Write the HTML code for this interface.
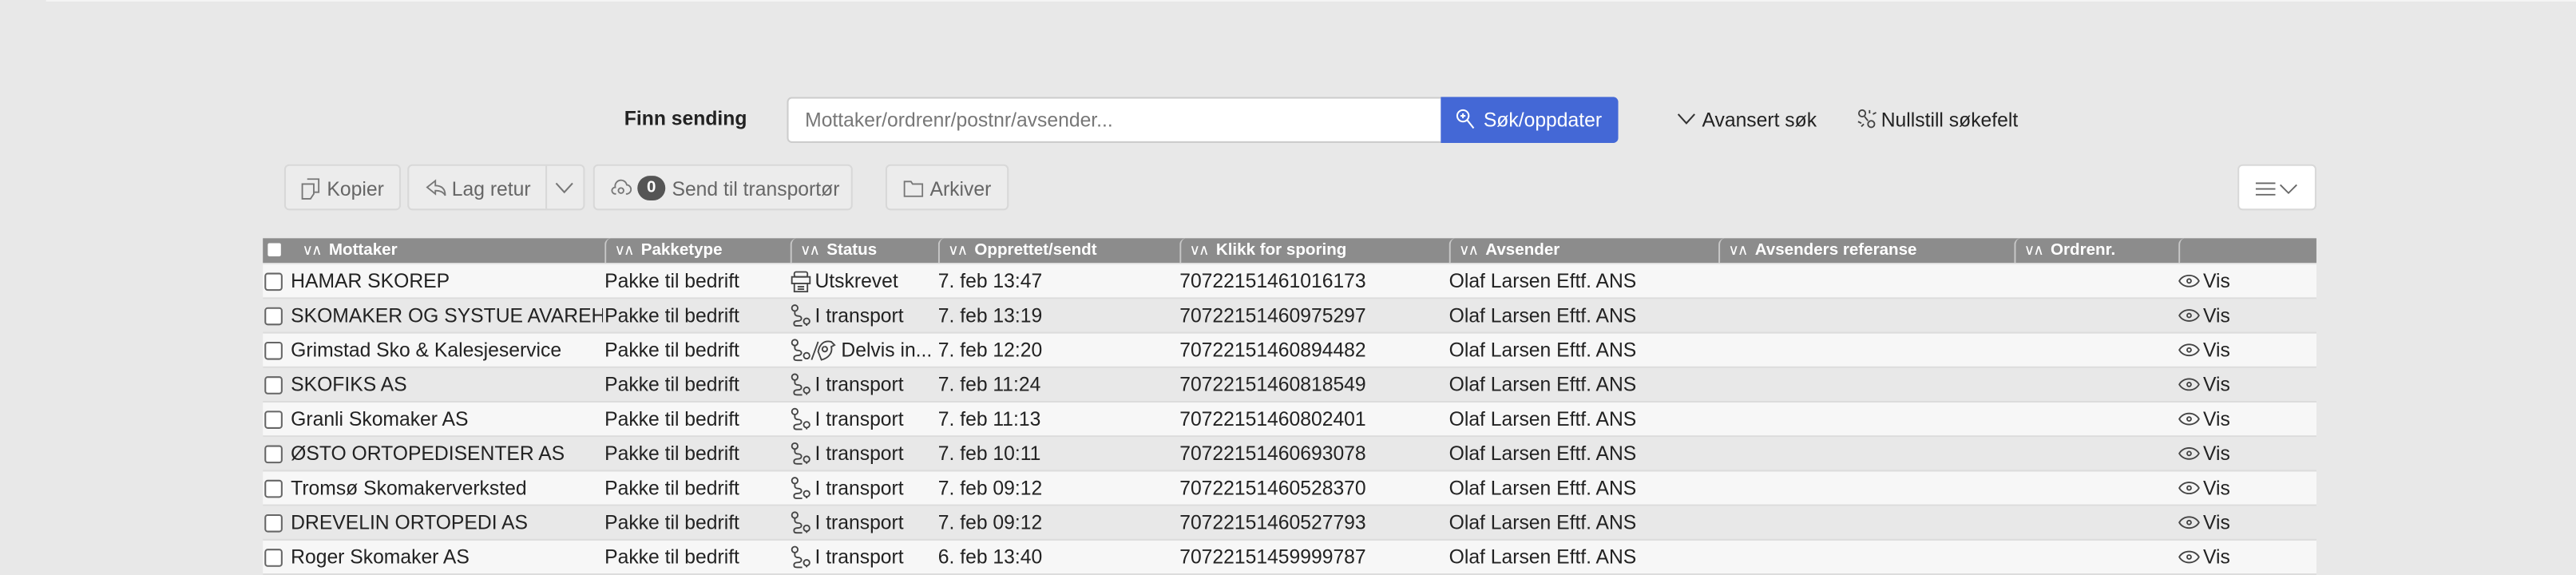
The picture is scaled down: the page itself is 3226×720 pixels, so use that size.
<!DOCTYPE html>
<html><head><meta charset="utf-8">
<style>
html,body{margin:0;padding:0;width:3226px;height:694px;overflow:hidden;background:#e8e8e8;}
#s{position:absolute;left:0;top:0;width:1568px;height:337px;transform:scale(2.0574);transform-origin:0 0;font-family:"Liberation Sans",Arial,sans-serif;color:#222;}
.a{position:absolute;white-space:nowrap;}
.topline{left:28px;top:0;width:1540px;height:1px;background:#f4f4f4;}
.lbl{left:380px;top:65px;font-size:12px;font-weight:bold;}
.inp{left:479px;top:59px;width:398px;height:28px;background:#fff;border:1px solid #ccc;border-right:none;border-radius:3px 0 0 3px;box-sizing:border-box;}
.inp span{position:absolute;left:10px;top:6px;font-size:12px;color:#777;}
.btn{left:877px;top:59px;width:108px;height:28px;background:#4468d6;border-radius:0 3px 3px 0;color:#fff;font-size:12px;}
.lnk{font-size:12px;top:66px;color:#222;}
.tb{top:100px;height:28px;border:1px solid #d8d8d8;border-radius:3px;background:#ececec;box-sizing:border-box;font-size:12px;color:#666;}
.tb span{position:absolute;top:7px;}
.hdr{left:160px;top:145px;width:1250px;height:15px;background:#8c8c8c;}
.hc{position:absolute;top:0;height:15px;border-left:1px solid #c8c8c8;border-radius:4px 4px 0 0;color:#fff;font-size:10px;font-weight:bold;line-height:15px;}
.hc i{font-style:normal;font-weight:normal;font-size:9px;margin-right:5px;letter-spacing:-1px;}
.row{position:absolute;left:160px;width:1250px;height:21px;border-bottom:1px solid #dcdcdc;box-sizing:border-box;font-size:12px;line-height:20px;}
.row span{position:absolute;top:0;white-space:nowrap;}
.cb{position:absolute;left:1px;top:5px;width:9px;height:9px;border:1px solid #666;border-radius:2px;background:#fff;}
svg{position:absolute;}
</style></head><body><div id="s">
<div class="a topline"></div>
<div class="a lbl">Finn sending</div>
<div class="a inp"><span>Mottaker/ordrenr/postnr/avsender...</span></div>
<div class="a btn">
<svg style="left:9px;top:7px" width="12" height="14" viewBox="0 0 12 14" fill="none" stroke="#fff" stroke-width="1"><circle cx="4.5" cy="4.5" r="3.5"/><path d="M3 4.5h3M4.5 3v3M7 7l4 5"/></svg>
<span style="position:absolute;left:26px;top:7px">Søk/oppdater</span></div>
<svg style="left:1021px;top:69px" width="11" height="7" viewBox="0 0 11 7" fill="none" stroke="#333"><path d="M0.5 0.5l5 5.5 5-5.5"/></svg>
<div class="a lnk" style="left:1036px">Avansert søk</div>
<svg style="left:1130px;top:66px" width="13" height="13" viewBox="0 0 13 13" fill="none" stroke="#444" stroke-width=".9"><circle cx="3.5" cy="3" r="2"/><circle cx="9" cy="9.5" r="2"/><path d="M5 5l2 2.5M8 1v2M10 3.5l2-1M1 8l2 1M3 11l1.5-1.5"/></svg>
<div class="a lnk" style="left:1145px">Nullstill søkefelt</div>

<div class="a tb" style="left:173px;width:71px"><svg style="left:9px;top:7px" width="12" height="14" viewBox="0 0 12 14" fill="none" stroke="#777" stroke-width=".9"><path d="M4 1h7v8H8M1 4h7v6l-2 3H1z"/></svg><span style="left:25px">Kopier</span></div>
<div class="a tb" style="left:248px;width:108px"><svg style="left:10px;top:8px" width="13" height="11" viewBox="0 0 13 11" fill="none" stroke="#777" stroke-width=".9"><path d="M6 1L1 5l5 4V7c3 0 5 1 6 3 0-4-2-6-6-6z"/></svg><span style="left:26px">Lag retur</span><div style="position:absolute;left:83px;top:0;width:1px;height:26px;background:#d8d8d8"></div><svg style="left:89px;top:10px" width="11" height="7" viewBox="0 0 11 7" fill="none" stroke="#777"><path d="M.5.5l5 5.5 5-5.5"/></svg></div>
<div class="a tb" style="left:361px;width:158px"><svg style="left:10px;top:8px" width="13" height="11" viewBox="0 0 13 11" fill="none" stroke="#777" stroke-width=".9"><path d="M3 9H2.5A2 2 0 0 1 2.5 5 3.5 3.5 0 0 1 9.5 3.5 2.8 2.8 0 0 1 10 9H9"/><circle cx="6" cy="7" r="1.6"/></svg><div style="position:absolute;left:26px;top:6px;width:17px;height:15px;border-radius:8px;background:#555;color:#fff;font-size:10px;font-weight:bold;text-align:center;line-height:15px">0</div><span style="left:47px">Send til transportør</span></div>
<div class="a tb" style="left:539px;width:75px"><svg style="left:10px;top:8px" width="12" height="11" viewBox="0 0 12 11" fill="none" stroke="#777" stroke-width=".9"><path d="M.5 1.5h4l1 1.5h6v7.5H.5z"/></svg><span style="left:26px">Arkiver</span></div>
<div class="a tb" style="left:1362px;width:48px;background:#fff"><svg style="left:10px;top:10px" width="27" height="8" viewBox="0 0 27 8" fill="none" stroke="#666" stroke-width=".9"><path d="M0 .5h12M0 4h12M0 7.5h12M15 1.5l5 5 5-5"/></svg></div>

<div class="a hdr">
<div class="hc" style="left:0;width:207px;border-left:none"><div style="position:absolute;left:3px;top:3px;width:8px;height:8px;background:#fff;border-radius:1px"></div><span style="position:absolute;left:24px"><i>∨∧</i>Mottaker</span></div>
<div class="hc" style="left:208px;width:112px"><span style="position:absolute;left:5px"><i>∨∧</i>Pakketype</span></div>
<div class="hc" style="left:321px;width:89px"><span style="position:absolute;left:5px"><i>∨∧</i>Status</span></div>
<div class="hc" style="left:411px;width:146px"><span style="position:absolute;left:5px"><i>∨∧</i>Opprettet/sendt</span></div>
<div class="hc" style="left:558px;width:163px"><span style="position:absolute;left:5px"><i>∨∧</i>Klikk for sporing</span></div>
<div class="hc" style="left:722px;width:163px"><span style="position:absolute;left:5px"><i>∨∧</i>Avsender</span></div>
<div class="hc" style="left:886px;width:179px"><span style="position:absolute;left:5px"><i>∨∧</i>Avsenders referanse</span></div>
<div class="hc" style="left:1066px;width:99px"><span style="position:absolute;left:5px"><i>∨∧</i>Ordrenr.</span></div>
<div class="hc" style="left:1166px;width:84px"></div>
</div>

<div id="rows"></div>
</div>
<svg width="0" height="0" style="position:absolute">
</svg>
<script>
var P='<svg style="left:321px;top:4px" width="13" height="13" viewBox="0 0 13 13" fill="none" stroke="#444" stroke-width=".9"><rect x="2.5" y=".5" width="8" height="3" rx="1"/><path d="M1 3.5h11v4H1zM2.5 7.5v5h8v-5M4.5 9.5h4M4.5 11h4"/></svg>';
var T='<svg style="left:321px;top:3px" width="13" height="14" viewBox="0 0 13 14" fill="none" stroke="#444" stroke-width=".9"><circle cx="2.8" cy="2.5" r="1.8"/><path d="M2.8 4.3v1.5c0 1 1 1.5 2 1.5s2 .5 2 1.5-1 1.5-2 1.5-2.5.2-2.5 1.5.5 1.5 2 1.5h3"/><circle cx="10" cy="10.5" r="1.8"/><path d="M10 12.3v1"/></svg>';
var D='<svg style="left:321px;top:3px" width="30" height="14" viewBox="0 0 30 14" fill="none" stroke="#444" stroke-width=".9"><circle cx="2.8" cy="2.5" r="1.8"/><path d="M2.8 4.3v1.5c0 1 1 1.5 2 1.5s2 .5 2 1.5-1 1.5-2 1.5-2.5.2-2.5 1.5.5 1.5 2 1.5h3"/><circle cx="10" cy="10.5" r="1.8"/><path d="M13 13l4-11M17 8c1-5 4-7 8-6l2 2-2 1c1 4-2 7-6 8zM21 5a1.5 1.5 0 1 0 .1 0"/></svg>';
var E='<svg style="left:1166px;top:6px" width="13" height="8" viewBox="0 0 13 8" fill="none" stroke="#444" stroke-width=".9"><path d="M.5 4C3-.5 10-.5 12.5 4 10 8.5 3 8.5.5 4z"/><circle cx="6.5" cy="4" r="1.2"/></svg>';
var d=[["HAMAR SKOREP",P,"Utskrevet","7. feb 13:47","70722151461016173"],
["SKOMAKER OG SYSTUE AVAREH",T,"I transport","7. feb 13:19","70722151460975297"],
["Grimstad Sko &amp; Kalesjeservice",D,"Delvis in...","7. feb 12:20","70722151460894482"],
["SKOFIKS AS",T,"I transport","7. feb 11:24","70722151460818549"],
["Granli Skomaker AS",T,"I transport","7. feb 11:13","70722151460802401"],
["ØSTO ORTOPEDISENTER AS",T,"I transport","7. feb 10:11","70722151460693078"],
["Tromsø Skomakerverksted",T,"I transport","7. feb 09:12","70722151460528370"],
["DREVELIN ORTOPEDI AS",T,"I transport","7. feb 09:12","70722151460527793"],
["Roger Skomaker AS",T,"I transport","6. feb 13:40","70722151459999787"]];
var h='';
for(var i=0;i<d.length;i++){var r=d[i];var bg=i%2?'#e8e8e8':'#f7f7f7';
var sx=(r[1]==D)?352:336;
h+='<div class="row" style="top:'+(161+21*i)+'px;background:'+bg+'"><div class="cb"></div><span style="left:17px;width:190px;overflow:hidden">'+r[0]+'</span><span style="left:208px">Pakke til bedrift</span>'+r[1]+'<span style="left:'+sx+'px">'+r[2]+'</span><span style="left:411px">'+r[3]+'</span><span style="left:558px">'+r[4]+'</span><span style="left:722px">Olaf Larsen Eftf. ANS</span>'+E+'<span style="left:1181px">Vis</span></div>';}
document.getElementById('rows').innerHTML=h;
</script>
</body></html>
